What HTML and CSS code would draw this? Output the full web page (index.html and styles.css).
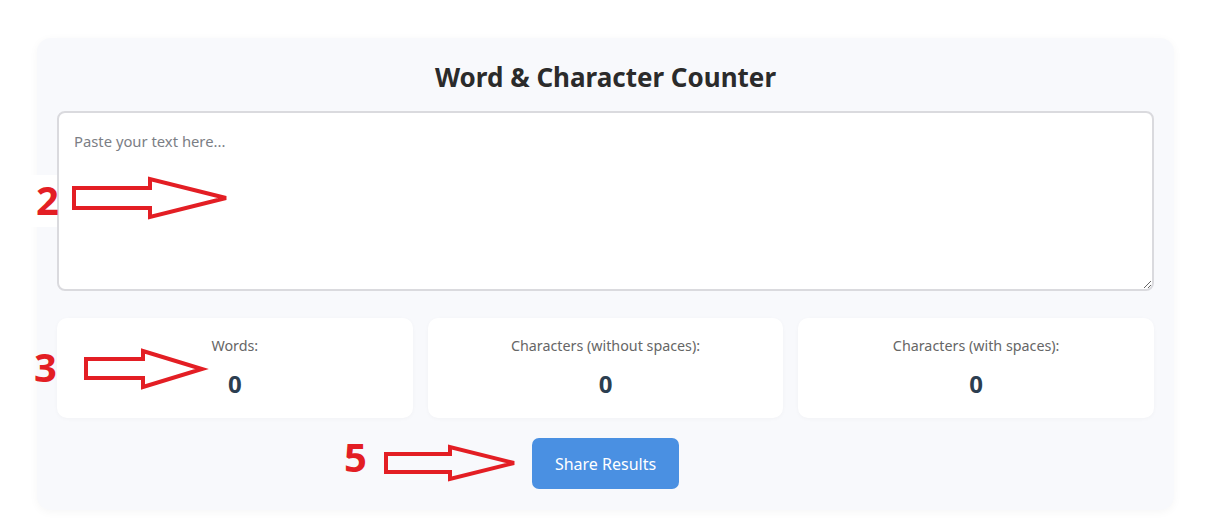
FILE: index.html
```html
<!DOCTYPE html>
<html lang="en">
<head>
<meta charset="utf-8">
<title>Word &amp; Character Counter</title>
<link rel="stylesheet" href="styles.css">
</head>
<body>
<div class="page">
  <div class="card">
    <h1 class="title">Word &amp; Character Counter</h1>
    <textarea class="input" placeholder="Paste your text here..."></textarea>
    <div class="stats">
      <div class="stat">
        <div class="stat-label">Words:</div>
        <div class="stat-value">0</div>
      </div>
      <div class="stat">
        <div class="stat-label">Characters (without spaces):</div>
        <div class="stat-value">0</div>
      </div>
      <div class="stat">
        <div class="stat-label">Characters (with spaces):</div>
        <div class="stat-value">0</div>
      </div>
    </div>
    <div class="actions">
      <button class="share">Share Results</button>
    </div>
  </div>

  <div class="mark mark-2">2</div>
  <div class="mark mark-3">3</div>
  <div class="mark mark-5">5</div>
  <svg class="arrows" width="1211" height="519" viewBox="0 0 1211 519">
    <g fill="none" stroke="#e31e24" stroke-width="4" stroke-linejoin="miter">
      <polygon points="74,188 150,188 150,179 226,198 150,217 150,208 74,208"/>
      <polygon points="86,359 143,359 143,351 202,369 143,387 143,378 86,378"/>
      <polygon points="386,454 450,454 450,447 514,463 450,479 450,472 386,472"/>
    </g>
  </svg>
</div>
</body>
</html>
```

FILE: styles.css
```css
* { box-sizing: border-box; }
html, body { margin: 0; padding: 0; background: #ffffff; }
body { font-family: "Noto Sans", "Open Sans", sans-serif; }

.page {
  position: relative;
  width: 1211px;
  height: 519px;
  padding-top: 38px;
}

.card {
  width: 1137px;
  margin: 0 auto;
  background: #f8f9fc;
  border-radius: 14px;
  box-shadow: 0 2px 10px rgba(0, 0, 0, 0.04);
  padding: 20px 20px 21px;
  display: flex;
  flex-direction: column;
}

.title {
  margin: 3px 0 18px;
  text-align: center;
  font-size: 26px;
  line-height: 32px;
  font-weight: 700;
  color: #2b2b2b;
}

.input {
  display: block;
  width: 100%;
  height: 180px;
  border: 2px solid #dadade;
  border-radius: 8px;
  background: #ffffff;
  padding: 18px 15px 14px;
  font-family: inherit;
  font-size: 14.8px;
  color: #333;
  resize: vertical;
  outline: none;
}
.input::placeholder { color: #7b7e85; }

.stats {
  margin-top: 27px;
  display: grid;
  grid-template-columns: repeat(3, 1fr);
  gap: 15px;
}

.stat {
  height: 100px;
  background: #ffffff;
  border-radius: 10px;
  box-shadow: 0 1px 4px rgba(0, 0, 0, 0.03);
  display: flex;
  flex-direction: column;
  align-items: center;
  padding-top: 18px;
}

.stat-label {
  font-size: 14.3px;
  line-height: 20px;
  color: #666666;
}

.stat-value {
  margin-top: 12px;
  font-size: 24px;
  line-height: 32px;
  font-weight: 700;
  color: #2c3e50;
}

.actions {
  margin-top: 20px;
  display: flex;
  justify-content: center;
}

.share {
  width: 147px;
  height: 51px;
  border: none;
  border-radius: 7px;
  background: #4a90e2;
  color: #ffffff;
  font-family: inherit;
  font-size: 16px;
}

.mark {
  position: absolute;
  font-family: "Noto Sans", "Open Sans", sans-serif;
  font-weight: 700;
  font-size: 40px;
  line-height: 1;
  color: #e31e24;
}
.mark-2 { left: 20px; top: 175px; width: 37px; height: 52px; background: #ffffff; padding: 5px 0 0 16px; }
.mark-3 { left: 34px; top: 347px; }
.mark-5 { left: 344px; top: 437px; }

.arrows {
  position: absolute;
  left: 0;
  top: 0;
  pointer-events: none;
}
```
